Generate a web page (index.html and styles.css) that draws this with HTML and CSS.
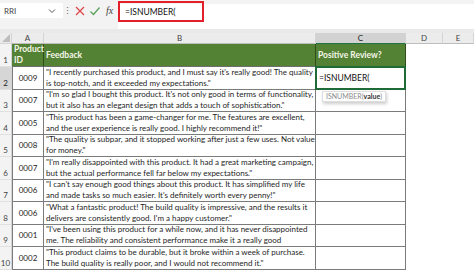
FILE: index.html
```html
<!DOCTYPE html>
<html>
<head>
<meta charset="utf-8">
<link rel="stylesheet" href="styles.css">
</head>
<body>
<div class="app">
  <div class="fbar">
    <div class="namebox"><span>RRI</span>
      <svg class="chev" width="8" height="6" viewBox="0 0 8 6"><path d="M1 1.5 L4 4.5 L7 1.5" fill="none" stroke="#555" stroke-width="1"/></svg>
    </div>
    <div class="dots">⋮</div>
    <svg class="ico" width="12" height="12" viewBox="0 0 12 12"><path d="M2 2 L10 10 M10 2 L2 10" stroke="#e0474c" stroke-width="1.3" fill="none"/></svg>
    <svg class="ico" width="12" height="12" viewBox="0 0 12 12"><path d="M1.5 6.5 L4.5 9.5 L10.5 2.5" stroke="#5aa05a" stroke-width="1.3" fill="none"/></svg>
    <div class="fx">fx</div>
    <div class="formula">
      <div class="redbox">=ISNUMBER(</div>
    </div>
  </div>
  <div class="gap"></div>
  <div class="sheet">
    <div class="corner"><svg width="8" height="8" viewBox="0 0 8 8"><path d="M8 0 L8 8 L0 8 Z" fill="#bdbdbd"/></svg></div>
    <div class="ch">A</div>
    <div class="ch">B</div>
    <div class="ch sel">C</div>
    <div class="ch">D</div>
    <div class="ch">E</div>

    <div class="rh">1</div>
    <div class="hd">Product<br>ID</div>
    <div class="hd">Feedback</div>
    <div class="hd">Positive Review?</div>
    <div class="blank"></div><div class="blank"></div>

    <div class="rh rsel">2</div>
    <div class="id">0009</div>
    <div class="fb"><span>"I recently purchased this product, and I must say it's really good! The quality</span><span>is top-notch, and it exceeded my expectations."</span></div>
    <div class="c active">=ISNUMBER(<div class="tip">ISNUMBER(<b>value</b>)</div></div>
    <div class="blank"></div><div class="blank"></div>

    <div class="rh">3</div>
    <div class="id">0007</div>
    <div class="fb"><span>"I'm so glad I bought this product. It's not only good in terms of functionality,</span><span>but it also has an elegant design that adds a touch of sophistication."</span></div>
    <div class="c"></div>
    <div class="blank"></div><div class="blank"></div>

    <div class="rh">4</div>
    <div class="id">0005</div>
    <div class="fb"><span>"This product has been a game-changer for me. The features are excellent,</span><span>and the user experience is really good. I highly recommend it!"</span></div>
    <div class="c"></div>
    <div class="blank"></div><div class="blank"></div>

    <div class="rh">5</div>
    <div class="id">0008</div>
    <div class="fb"><span>"The quality is subpar, and it stopped working after just a few uses. Not value</span><span>for money."</span></div>
    <div class="c"></div>
    <div class="blank"></div><div class="blank"></div>

    <div class="rh">6</div>
    <div class="id">0007</div>
    <div class="fb"><span>"I'm really disappointed with this product. It had a great marketing campaign,</span><span>but the actual performance fell far below my expectations."</span></div>
    <div class="c"></div>
    <div class="blank"></div><div class="blank"></div>

    <div class="rh">7</div>
    <div class="id">0006</div>
    <div class="fb"><span>"I can't say enough good things about this product. It has simplified my life</span><span>and made tasks so much easier. It's definitely worth every penny!"</span></div>
    <div class="c"></div>
    <div class="blank"></div><div class="blank"></div>

    <div class="rh">8</div>
    <div class="id">0006</div>
    <div class="fb"><span>"What a fantastic product! The build quality is impressive, and the results it</span><span>delivers are consistently good. I'm a happy customer."</span></div>
    <div class="c"></div>
    <div class="blank"></div><div class="blank"></div>

    <div class="rh">9</div>
    <div class="id">0001</div>
    <div class="fb"><span>"I've been using this product for a while now, and it has never disappointed</span><span>me. The reliability and consistent performance make it a really good</span></div>
    <div class="c"></div>
    <div class="blank"></div><div class="blank"></div>

    <div class="rh">10</div>
    <div class="id">0002</div>
    <div class="fb"><span>"This product claims to be durable, but it broke within a week of purchase.</span><span>The build quality is really poor, and I would not recommend it."</span></div>
    <div class="c"></div>
    <div class="blank"></div><div class="blank"></div>
  </div>
</div>
</body>
</html>
```
FILE: styles.css
```css
* { box-sizing: border-box; }
html, body { margin: 0; padding: 0; background: #fff; }
body { width: 474px; height: 270px; overflow: hidden; font-family: "Lato", "Liberation Sans", sans-serif; }
.app { width: 474px; height: 270px; overflow: hidden; }

.fbar { height: 29px; background: #f3f3f3; display: flex; align-items: flex-start; padding-top: 3px; }
.namebox { width: 63px; height: 15px; background: #fff; display: flex; align-items: center; justify-content: space-between; padding: 0 7px 0 4px; font-size: 8px; color: #444; }
.chev { margin-top: 1px; }
.dots { width: 8px; text-align: center; font-size: 9px; color: #666; line-height: 15px; }
.ico { margin: 2px 0 0 3px; }
.fx { font-family: "Liberation Serif", serif; font-style: italic; font-size: 10px; color: #444; line-height: 15px; margin-left: 5px; width: 8px; }
.formula { flex: 1; align-self: stretch; background: #fff; margin-left: 4px; margin-top: 1px; position: relative; }
.redbox { position: absolute; left: 0; top: -3px; width: 86px; height: 21px; border: 2px solid #e3202a; font-size: 8.5px; color: #111; padding: 4px 0 0 5px; }

.gap { height: 4px; background: #e9e9e9; }

.sheet { display: grid; grid-template-columns: 12px 32px 272px 90px 37px 1fr; grid-template-rows: 11px 23px repeat(9, 22.5px); }
.corner { background: #ececec; border-right: 1px solid #d4d4d4; border-bottom: 1px solid #d4d4d4; display: flex; align-items: flex-end; justify-content: flex-end; padding: 0 1px 1px 0; }
.ch { background: #ececec; border-right: 1px solid #d4d4d4; border-bottom: 1px solid #bdbdbd; font-size: 8px; color: #444; text-align: center; line-height: 11px; }
.ch.sel { background: #d2d2d2; border-bottom: 1px solid #217346; color: #222; }
.rh { background: #f3f3f3; border-right: 1px solid #d4d4d4; border-bottom: 1px solid #e0e0e0; font-size: 8px; color: #444; display: flex; align-items: flex-end; justify-content: center; padding-bottom: 1px; overflow: hidden; white-space: nowrap; }
.rh.rsel { background: #d6d6d6; color: #222; }
.hd { background: #548235; color: #f4f6e8; font-weight: bold; font-size: 8.5px; line-height: 11px; padding: 1px 2px; display: flex; align-items: center; border-right: 1px solid #2f4d1c; border-bottom: 1px solid #6e6e6e; }
.blank { background: #fff; }
.id, .fb, .c { border-right: 1px solid #7b7b7b; border-bottom: 1px solid #7b7b7b; background: #fff; font-size: 8px; color: #1e1e1e; }
.id { border-left: 1px solid #7b7b7b; display: flex; align-items: center; justify-content: center; }
.fb { display: flex; flex-direction: column; justify-content: center; padding: 0 2px; line-height: 11px; overflow: hidden; white-space: nowrap; }
.c { position: relative; }
.c.active { border: 2px solid #1e6b37; font-size: 8.5px; padding: 5px 0 0 2px; color: #111; margin-left: -1px; margin-top: -1px; }
.tip { position: absolute; left: 5px; top: 23px; background: #fff; border: 1px solid #dedede; box-shadow: 1px 2px 3px rgba(0,0,0,0.2); font-size: 7px; color: #8a8a8a; padding: 0 3px; line-height: 9px; white-space: nowrap; z-index: 2; }
.tip b { color: #333; }
```
